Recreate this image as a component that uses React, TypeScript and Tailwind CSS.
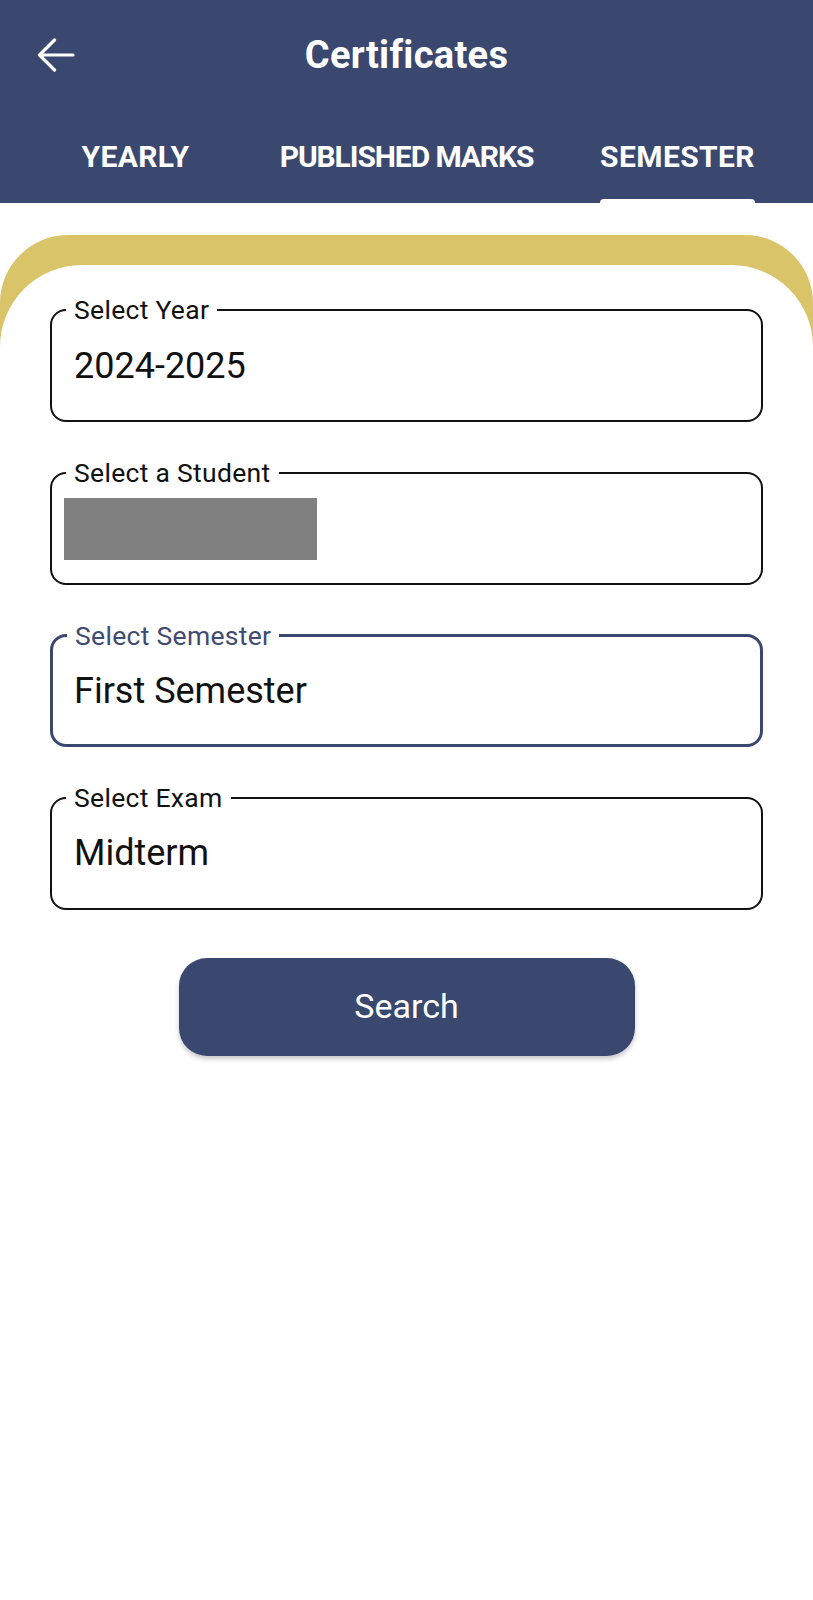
import React from "react";

const NAVY = "#3a4870";

type FieldProps = {
  label: string;
  value?: string;
  focused?: boolean;
  redacted?: boolean;
};

const Field = ({ label, value, focused, redacted }: FieldProps) => {
  return (
    <div
      className={`relative h-[113px] rounded-[16px] flex items-center px-[22px] ${
        focused ? "border-[3px] border-[#3a4870]" : "border-2 border-[#111111]"
      }`}
    >
      <span
        className={`absolute left-[14px] -top-[16px] px-2 bg-white text-[26.5px] leading-[30px] tracking-[0.3px] ${
          focused ? "-left-[-13px] text-[#3f4b70]" : "text-[#111111]"
        }`}
      >
        {label}
      </span>
      {redacted ? (
        <div className="-ml-[10px] mt-[2px] w-[253px] h-[62px] bg-[#808080]" />
      ) : (
        <span className={`text-[36px] text-[#111111] ${focused ? "-ml-[1px]" : ""}`}>{value}</span>
      )}
    </div>
  );
};

const tabs = [
  { label: "YEARLY", cls: "tracking-[0.4px]" },
  { label: "PUBLISHED MARKS", cls: "tracking-[-1.1px]" },
  { label: "SEMESTER", cls: "tracking-[0.4px]" },
];

export default function App() {
  return (
    <div className="w-[813px] min-h-[1600px] bg-white font-['Roboto','Liberation_Sans',sans-serif]">
      {/* App bar */}
      <div className="h-[203px] bg-[#3a4870] text-white flex flex-col">
        <div className="relative h-[110px] flex items-center justify-center">
          <button aria-label="Back" className="absolute left-[37px] top-[38px]">
            <svg width="38" height="34" viewBox="0 0 38 34" fill="none">
              <path
                d="M36 17H3M17.5 2L2.5 17l15 15"
                stroke="white"
                strokeWidth="3.2"
                strokeLinecap="round"
                strokeLinejoin="round"
              />
            </svg>
          </button>
          <h1 className="text-[38px] font-bold tracking-[0.3px]">Certificates</h1>
        </div>
        <div className="flex-1 grid grid-cols-3">
          {tabs.map((t, i) => (
            <div key={t.label} className="flex justify-center">
              <div className="relative flex items-center h-full">
                <span className={`text-[30px] font-bold ${t.cls}`}>{t.label}</span>
                {i === 2 && (
                  <div className="absolute left-0 right-0 bottom-0 h-[4px] bg-white rounded-t-[4px]" />
                )}
              </div>
            </div>
          ))}
        </div>
      </div>

      {/* Gold arc + form card */}
      <div className="mt-[32px] pt-[30px] bg-[#dac46a] rounded-t-[68px]">
        <div className="bg-white rounded-t-[82px] px-[50px] pt-[44px] pb-[40px] min-h-[1300px]">
          <div className="flex flex-col gap-[49.6px]">
            <Field label="Select Year" value="2024-2025" />
            <Field label="Select a Student" redacted />
            <Field label="Select Semester" value="First Semester" focused />
            <Field label="Select Exam" value="Midterm" />
          </div>
          <div className="flex justify-center mt-[48px]">
            <button
              className="w-[456px] h-[98px] rounded-[28px] text-white text-[34px] shadow-[0_3px_5px_rgba(0,0,0,0.22)]"
              style={{ backgroundColor: NAVY }}
            >
              Search
            </button>
          </div>
        </div>
      </div>
    </div>
  );
}
